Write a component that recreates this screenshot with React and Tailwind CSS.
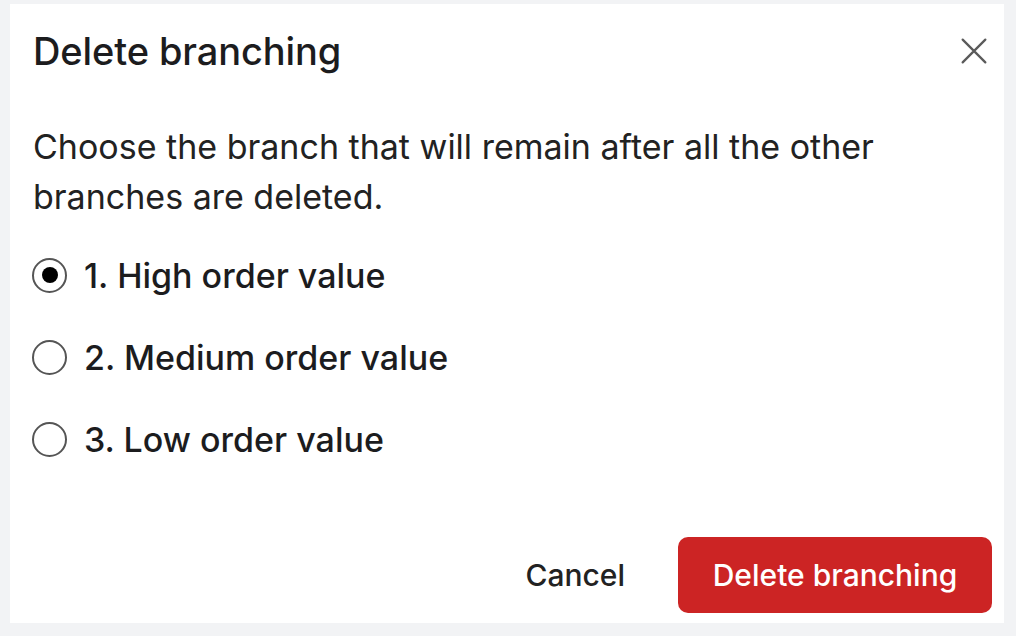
import React, { useState } from 'react';

const options = ['1. High order value', '2. Medium order value', '3. Low order value'];

const App = () => {
  const [selected, setSelected] = useState(0);

  return (
    <div className="w-full h-[636px] bg-[#f2f3f5] pt-[4px] pl-[10px] pr-[12px] pb-[13px] font-['Inter',sans-serif] text-[#1c1c1e]">
      <div className="h-full bg-white flex flex-col pl-[23px] pr-[12px]">
        {/* header */}
        <div className="flex items-center justify-between h-[90px] pt-[4px]">
          <h1 className="text-[38px] font-medium tracking-[-0.1px]">Delete branching</h1>
          <button className="w-[36px] h-[36px] flex items-center justify-center text-[#5a5a5a]">
            <svg width="34" height="34" viewBox="0 0 24 24" fill="none" stroke="currentColor" strokeWidth="1.6" strokeLinecap="round">
              <path d="M4 4L20 20M20 4L4 20" />
            </svg>
          </button>
        </div>

        <p className="text-[34px] leading-[50px] mt-[28px] text-[#222] pr-[30px]">
          Choose the branch that will remain after all the other branches are deleted.
        </p>

        {/* options */}
        <div className="flex flex-col mt-[12px]">
          {options.map((label, i) => (
            <label key={i} className="flex items-center h-[82px] cursor-pointer">
              <span className="w-[35px] h-[35px] -ml-[1px] rounded-full border-2 border-[#555] flex items-center justify-center shrink-0 bg-white">
                {selected === i && <span className="w-[16px] h-[16px] rounded-full bg-black" />}
              </span>
              <input type="radio" className="hidden" checked={selected === i} onChange={() => setSelected(i)} />
              <span className="ml-[17px] text-[34px] font-medium">{label}</span>
            </label>
          ))}
        </div>

        {/* footer */}
        <div className="mt-auto mb-[10px] flex items-center justify-end gap-[53px]">
          <button className="text-[30px] font-medium text-[#222]">Cancel</button>
          <button className="h-[76px] w-[314px] rounded-[10px] bg-[#cc2424] text-white text-[30px] font-medium">
            Delete branching
          </button>
        </div>
      </div>
    </div>
  );
};

export default App;
